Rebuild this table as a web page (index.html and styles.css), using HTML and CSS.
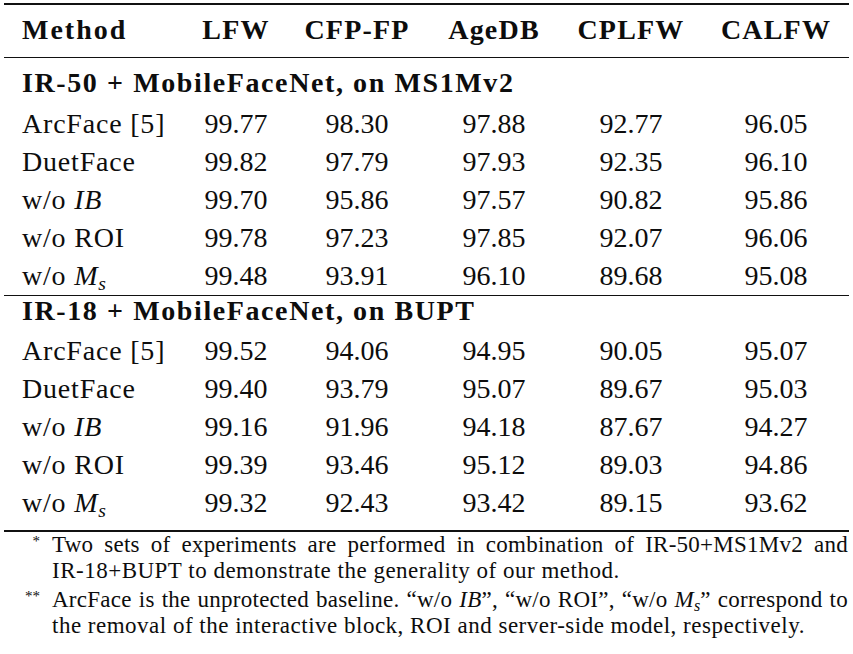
FILE: index.html
```html
<!DOCTYPE html>
<html lang="en">
<head>
<meta charset="utf-8">
<title>Ablation results</title>
<link rel="stylesheet" href="styles.css">
</head>
<body>
<div class="page">
  <div class="tbl">
    <div class="row head">
      <div class="c name">Method</div>
      <div class="c">LFW</div>
      <div class="c">CFP-FP</div>
      <div class="c">AgeDB</div>
      <div class="c">CPLFW</div>
      <div class="c">CALFW</div>
    </div>
    <div class="group first">IR-50 + MobileFaceNet, on MS1Mv2</div>
    <div class="section">
      <div class="row"><div class="c name">ArcFace [5]</div><div class="c">99.77</div><div class="c">98.30</div><div class="c">97.88</div><div class="c">92.77</div><div class="c">96.05</div></div>
      <div class="row"><div class="c name">DuetFace</div><div class="c">99.82</div><div class="c">97.79</div><div class="c">97.93</div><div class="c">92.35</div><div class="c">96.10</div></div>
      <div class="row"><div class="c name">w/o <i>IB</i></div><div class="c">99.70</div><div class="c">95.86</div><div class="c">97.57</div><div class="c">90.82</div><div class="c">95.86</div></div>
      <div class="row"><div class="c name">w/o ROI</div><div class="c">99.78</div><div class="c">97.23</div><div class="c">97.85</div><div class="c">92.07</div><div class="c">96.06</div></div>
      <div class="row"><div class="c name">w/o <i>M<sub>s</sub></i></div><div class="c">99.48</div><div class="c">93.91</div><div class="c">96.10</div><div class="c">89.68</div><div class="c">95.08</div></div>
    </div>
    <div class="group second">IR-18 + MobileFaceNet, on BUPT</div>
    <div class="section last">
      <div class="row"><div class="c name">ArcFace [5]</div><div class="c">99.52</div><div class="c">94.06</div><div class="c">94.95</div><div class="c">90.05</div><div class="c">95.07</div></div>
      <div class="row"><div class="c name">DuetFace</div><div class="c">99.40</div><div class="c">93.79</div><div class="c">95.07</div><div class="c">89.67</div><div class="c">95.03</div></div>
      <div class="row"><div class="c name">w/o <i>IB</i></div><div class="c">99.16</div><div class="c">91.96</div><div class="c">94.18</div><div class="c">87.67</div><div class="c">94.27</div></div>
      <div class="row"><div class="c name">w/o ROI</div><div class="c">99.39</div><div class="c">93.46</div><div class="c">95.12</div><div class="c">89.03</div><div class="c">94.86</div></div>
      <div class="row"><div class="c name">w/o <i>M<sub>s</sub></i></div><div class="c">99.32</div><div class="c">92.43</div><div class="c">93.42</div><div class="c">89.15</div><div class="c">93.62</div></div>
    </div>
  </div>
  <div class="notes">
    <div class="note">
      <span class="mark">*</span>
      <div class="text">
        <span class="ln full">Two sets of experiments are performed in combination of IR-50+MS1Mv2 and</span>
        <span class="ln">IR-18+BUPT to demonstrate the generality of our method.</span>
      </div>
    </div>
    <div class="note">
      <span class="mark">**</span>
      <div class="text">
        <span class="ln full">ArcFace is the unprotected baseline. “w/o <i>IB</i>”, “w/o ROI”, “w/o <i>M<sub>s</sub></i>” correspond to</span>
        <span class="ln">the removal of the interactive block, ROI and server-side model, respectively.</span>
      </div>
    </div>
  </div>
</div>
</body>
</html>
```

FILE: styles.css
```css
* { box-sizing: border-box; }

html, body {
  margin: 0;
  padding: 0;
  background: #ffffff;
}

body {
  font-family: "Liberation Serif", "Times New Roman", serif;
  color: #0d0d0d;
}

.page {
  padding: 3px 4px 0 4px;
  width: 853px;
}

.tbl {
  width: 845px;
  border-top: 2px solid #111111;
  border-bottom: 2px solid #111111;
  font-size: 28px;
}

.row {
  display: grid;
  grid-template-columns: 180px 104px 138px 136px 138px 149px;
  line-height: 38px;
  height: 38px;
}

.c {
  text-align: center;
  white-space: nowrap;
}

.c:last-child {
  padding-left: 3px;
}

.c.name {
  text-align: left;
  padding-left: 18px;
  letter-spacing: 0.8px;
}

.head {
  font-weight: bold;
  letter-spacing: 1.2px;
  height: auto;
  padding-top: 6px;
  padding-bottom: 8px;
  border-bottom: 1px solid #111111;
}

.head .c.name {
  letter-spacing: 2px;
}

.group {
  font-weight: bold;
  line-height: 30px;
  padding-left: 18px;
  letter-spacing: 1.6px;
  white-space: nowrap;
}

.group.first {
  padding-top: 10px;
  padding-bottom: 7px;
}

.group.second {
  padding-top: 0;
  padding-bottom: 6px;
}

.section {
  border-bottom: 1px solid #111111;
}

.section.last {
  border-bottom: none;
  padding-bottom: 8px;
}

i {
  font-style: italic;
  letter-spacing: inherit;
}

sub {
  font-size: 0.7em;
  line-height: 0;
  vertical-align: -0.25em;
  letter-spacing: 0;
}

.notes {
  width: 845px;
  font-size: 23px;
  line-height: 26px;
  letter-spacing: 0.5px;
}

.note {
  display: grid;
  grid-template-columns: 48px 796px;
}

.note + .note {
  margin-top: 3px;
}

.mark {
  font-size: 15px;
  line-height: 15px;
  text-align: right;
  padding-right: 12px;
  padding-top: 2px;
  letter-spacing: 0;
}

.ln {
  display: block;
  white-space: nowrap;
}

.ln.full {
  letter-spacing: 0.25px;
  text-align: justify;
  text-align-last: justify;
}
```
